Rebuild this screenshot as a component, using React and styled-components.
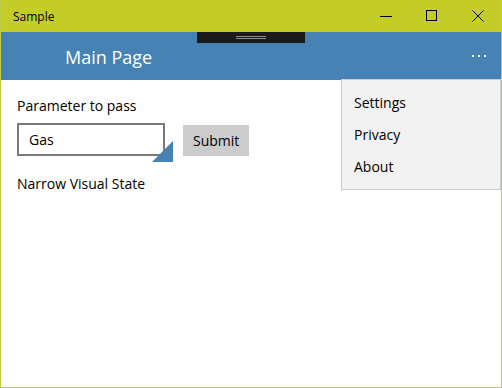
import React from "react";
import styled, { createGlobalStyle } from "styled-components";

const theme = {
  chrome: "#c4cc27",
  border: "#c0cd46",
  accent: "#4682b4",
  font: `"Segoe UI", "Open Sans", "Noto Sans", sans-serif`,
};

const GlobalStyle = createGlobalStyle`
  html, body {
    margin: 0;
    padding: 0;
    background: #fff;
  }
  body {
    font-family: ${theme.font};
  }
`;

export default function App() {
  return (
    <>
      <GlobalStyle />
      <Window>
        <TitleBar>
          <Title>Sample</Title>
          <Controls>
            <CaptionButton aria-label="Minimize">
              <svg width="12" height="12" viewBox="0 0 12 12">
                <path d="M0 6.5h12" stroke="#000" strokeWidth="1" />
              </svg>
            </CaptionButton>
            <CaptionButton aria-label="Maximize">
              <svg width="12" height="12" viewBox="0 0 12 12">
                <rect x="0.5" y="0.5" width="10" height="10" fill="none" stroke="#000" />
              </svg>
            </CaptionButton>
            <CaptionButton aria-label="Close">
              <svg width="12" height="12" viewBox="0 0 12 12">
                <path d="M0.5 0.5l11 11M11.5 0.5l-11 11" stroke="#000" strokeWidth="1" />
              </svg>
            </CaptionButton>
          </Controls>
        </TitleBar>
        <Header>
          <DragHandle>
            <HandleLine />
            <HandleLine />
          </DragHandle>
          <PageTitle>Main Page</PageTitle>
          <MoreButton aria-label="More">
            <Dot />
            <Dot />
            <Dot />
          </MoreButton>
        </Header>
        <Content>
          <Label>Parameter to pass</Label>
          <FormRow>
            <InputWrap>
              <TextBox defaultValue="Gas" />
              <Corner />
            </InputWrap>
            <SubmitButton>Submit</SubmitButton>
          </FormRow>
          <Label>Narrow Visual State</Label>
        </Content>
        <Menu>
          <MenuItem>Settings</MenuItem>
          <MenuItem>Privacy</MenuItem>
          <MenuItem>About</MenuItem>
        </Menu>
      </Window>
    </>
  );
}

const Window = styled.div`
  position: relative;
  box-sizing: border-box;
  width: 502px;
  height: 388px;
  border: 1px solid ${theme.border};
  border-top: none;
  display: flex;
  flex-direction: column;
  background: #fff;
  overflow: hidden;
`;

const TitleBar = styled.div`
  height: 32px;
  background: ${theme.chrome};
  display: flex;
  align-items: center;
  justify-content: space-between;
`;

const Title = styled.span`
  font-size: 12px;
  color: #000;
  padding-left: 12px;
`;

const Controls = styled.div`
  display: flex;
  height: 100%;
`;

const CaptionButton = styled.button`
  width: 46px;
  height: 100%;
  border: none;
  background: transparent;
  padding: 0;
  display: flex;
  align-items: center;
  justify-content: center;
`;

const Header = styled.div`
  position: relative;
  height: 48px;
  background: ${theme.accent};
  display: flex;
  align-items: center;
  justify-content: space-between;
  padding: 0 15px 0 64px;
`;

const DragHandle = styled.div`
  position: absolute;
  top: 0;
  left: 196px;
  width: 108px;
  height: 11px;
  background: #1b1b1b;
  display: flex;
  flex-direction: column;
  align-items: center;
  gap: 1px;
  padding-top: 4px;
  box-sizing: border-box;
`;

const HandleLine = styled.div`
  width: 30px;
  height: 1px;
  background: #8a8a8a;
`;

const PageTitle = styled.h1`
  margin: 0;
  font-size: 18px;
  font-weight: 400;
  color: #fff;
  padding-top: 2px;
`;

const MoreButton = styled.button`
  border: none;
  background: transparent;
  padding: 0;
  display: flex;
  gap: 4px;
`;

const Dot = styled.span`
  width: 2px;
  height: 2px;
  background: #fff;
`;

const Content = styled.div`
  padding: 16px 16px;
  display: flex;
  flex-direction: column;
  align-items: flex-start;
`;

const Label = styled.div`
  font-size: 14px;
  color: #000;
  line-height: 20px;
`;

const FormRow = styled.div`
  display: flex;
  align-items: flex-end;
  gap: 18px;
  margin: 7px 0 18px;
`;

const InputWrap = styled.div`
  position: relative;
  display: flex;
`;

const TextBox = styled.input`
  box-sizing: border-box;
  width: 148px;
  height: 33px;
  border: 2px solid #7a7a7a;
  padding: 0 10px;
  font-family: ${theme.font};
  font-size: 14px;
  color: #000;
  outline: none;
  margin: 0;
`;

const Corner = styled.div`
  position: absolute;
  left: 135px;
  top: 18px;
  width: 21px;
  height: 21px;
  background: ${theme.accent};
  clip-path: polygon(100% 0, 100% 100%, 0 100%);
`;

const SubmitButton = styled.button`
  height: 31px;
  padding: 0 10px;
  border: none;
  background: #cccccc;
  font-family: ${theme.font};
  font-size: 14px;
  color: #000;
`;

const Menu = styled.div`
  position: absolute;
  top: 79px;
  right: 0;
  width: 160px;
  box-sizing: border-box;
  background: #f2f2f2;
  border: 1px solid #cccccc;
  padding: 7px 0 6px;
`;

const MenuItem = styled.div`
  font-size: 14px;
  color: #000;
  height: 32px;
  line-height: 32px;
  padding-left: 12px;
`;
